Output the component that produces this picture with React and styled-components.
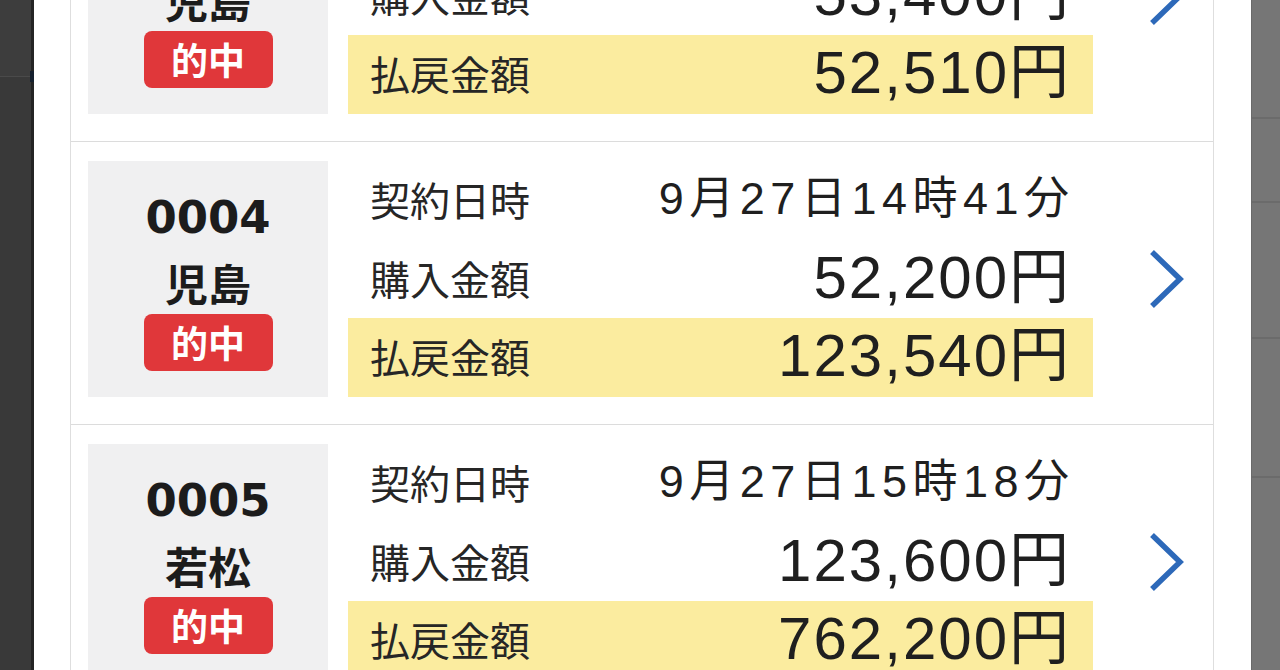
import React from 'react';
import styled, { createGlobalStyle } from 'styled-components';

const GlobalStyle = createGlobalStyle`
  html, body {
    margin: 0;
    padding: 0;
    background: #383838;
  }
  body {
    font-family: "Noto Sans CJK JP", sans-serif;
    overflow: hidden;
  }
`;

const tickets = [
  { no: '0003', name: '児島', date: '9月27日13時52分', buy: '53,400円', pay: '52,510円' },
  { no: '0004', name: '児島', date: '9月27日14時41分', buy: '52,200円', pay: '123,540円' },
  { no: '0005', name: '若松', date: '9月27日15時18分', buy: '123,600円', pay: '762,200円' },
];

// grid lines seen through the dimmed page on the right
const rightBands = [117, 82, 134, 137];

export default function App() {
  return (
    <Screen>
      <GlobalStyle />
      <LeftShade>
        <ShadeTop>
          <Spot />
        </ShadeTop>
      </LeftShade>

      <Panel>
        <List>
          {tickets.map(t => (
            <Card key={t.no}>
              <Badge>
                <Number>{t.no}</Number>
                <Name>{t.name}</Name>
                <Hit>的中</Hit>
              </Badge>
              <Details>
                <Row>
                  <Label>契約日時</Label>
                  <Value $kind="date">{t.date}</Value>
                </Row>
                <Row>
                  <Label>購入金額</Label>
                  <Value>{t.buy}</Value>
                </Row>
                <Row $highlight>
                  <Label>払戻金額</Label>
                  <Value>{t.pay}</Value>
                </Row>
              </Details>
              <ChevronCell>
                <svg width="36" height="60" viewBox="0 0 36 60">
                  <polyline points="4,3 32,30 4,57" fill="none" stroke="#2d69b9" strokeWidth="5.5" />
                </svg>
              </ChevronCell>
            </Card>
          ))}
        </List>
      </Panel>

      <RightShade>
        {rightBands.map((h, i) => (
          <Band key={i} style={{ height: h }} />
        ))}
      </RightShade>
    </Screen>
  );
}

const Screen = styled.div`
  display: flex;
  width: 1280px;
  height: 670px;
  overflow: hidden;
`;

const LeftShade = styled.div`
  width: 31px;
  flex-shrink: 0;
  background: #393939;
  border-right: 3px solid #242424;
  display: flex;
  flex-direction: column;
`;

const ShadeTop = styled.div`
  height: 76px;
  background: #3d3d3d;
  border-bottom: 1px solid #4a4a4a;
  display: flex;
  justify-content: flex-end;
  align-items: flex-end;
`;

const Spot = styled.div`
  width: 4px;
  height: 11px;
  margin-bottom: -6px;
  margin-right: -3px;
  background: #15202e;
`;

const Panel = styled.div`
  flex: 1;
  background: #ffffff;
  padding: 0 37px 0 36px;
`;

const RightShade = styled.div`
  width: 28px;
  flex-shrink: 0;
  background: #767676;
  border-left: 1px solid #6a6a6a;
  display: flex;
  flex-direction: column;
`;

const Band = styled.div`
  border-bottom: 2px solid #6b6b6b;
  flex-shrink: 0;
`;

const List = styled.div`
  margin-top: -141px;
  border-left: 1px solid #dedede;
  border-right: 1px solid #dedede;
`;

const Card = styled.div`
  display: flex;
  padding: 19px 0 27px 17px;
  border-bottom: 1px solid #dcdcdc;
`;

const Badge = styled.div`
  width: 240px;
  height: 236px;
  flex-shrink: 0;
  background: #f0f0f1;
  display: flex;
  flex-direction: column;
  align-items: center;
  justify-content: center;
  padding-top: 6px;
  box-sizing: border-box;
  color: #1c1c1c;
`;

const Number = styled.div`
  font-family: "DejaVu Sans", "Liberation Sans", sans-serif;
  font-weight: 700;
  font-size: 45px;
  line-height: 48px;
`;

const Name = styled.div`
  margin-top: 17px;
  font-weight: 700;
  font-size: 43px;
  line-height: 46px;
`;

const Hit = styled.div`
  margin-top: 9px;
  width: 129px;
  height: 57px;
  border-radius: 8px;
  background: #e0373a;
  color: #ffffff;
  font-weight: 700;
  font-size: 37px;
  line-height: 57px;
  text-align: center;
`;

const Details = styled.div`
  flex: 1;
  margin-left: 20px;
  display: flex;
  flex-direction: column;
`;

const Row = styled.div`
  flex: 1;
  display: flex;
  align-items: center;
  justify-content: space-between;
  padding: 0 24px 3px 22px;
  background: ${p => (p.$highlight ? '#fbec9f' : 'transparent')};
  color: #1f1f1f;
`;

const Label = styled.div`
  font-size: 40px;
  line-height: 1;
  color: #262626;
`;

const Value = styled.div`
  font-family: "Liberation Sans", "Noto Sans CJK JP", sans-serif;
  line-height: 1;
  white-space: nowrap;
  font-size: ${p => (p.$kind === 'date' ? '45px' : '60px')};
  letter-spacing: ${p => (p.$kind === 'date' ? '5.5px' : '2px')};
  margin-right: ${p => (p.$kind === 'date' ? '-5.5px' : '-2px')};
`;

const ChevronCell = styled.div`
  width: 120px;
  flex-shrink: 0;
  box-sizing: border-box;
  padding-left: 55px;
  display: flex;
  align-items: center;
`;
